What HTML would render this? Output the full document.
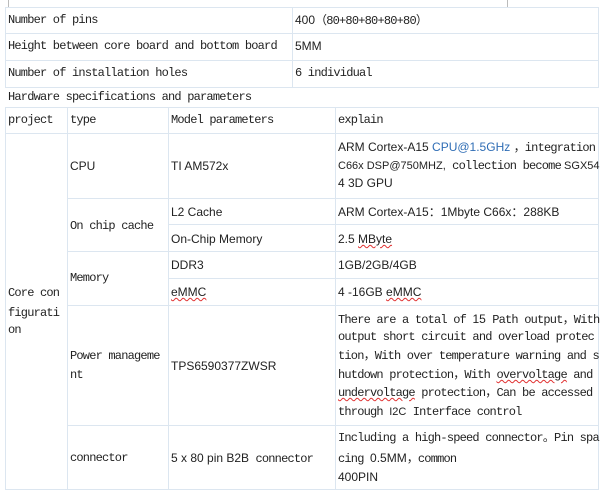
<!DOCTYPE html>
<html><head><meta charset="utf-8"><style>
body{margin:0;width:604px;height:491px;background:#fff;position:relative;overflow:hidden;color:#222}
.h,.v{position:absolute;background:#dce6f0}
.h{height:1px}.v{width:1px}
.t{position:absolute;white-space:nowrap;height:18px;line-height:18px;font-family:"Liberation Mono","Noto Sans CJK SC",monospace;font-size:12px;letter-spacing:-0.8px}
.m{font-family:"Liberation Mono","Noto Sans CJK SC",monospace;font-size:12px;letter-spacing:-0.8px}
.s{font-family:"Liberation Sans","Noto Sans CJK SC",sans-serif;font-size:12px;letter-spacing:0}
.b{color:#2f6db5}
.w{text-decoration:underline wavy #e03030;text-decoration-thickness:1px}
</style></head><body>
<div class="v" style="left:8px;top:0;height:7px;background:#bbb"></div>
<div class="v" style="left:507px;top:0;height:7px;background:#bbb"></div>
<div class="h" style="left:5px;top:7px;width:594px"></div>
<div class="h" style="left:5px;top:33px;width:594px"></div>
<div class="h" style="left:5px;top:60px;width:594px"></div>
<div class="h" style="left:5px;top:87px;width:594px"></div>
<div class="v" style="left:5px;top:7px;height:81px"></div>
<div class="v" style="left:292px;top:7px;height:81px"></div>
<div class="v" style="left:598px;top:7px;height:81px"></div>
<div class="t" style="left:8px;top:11px">Number of pins</div>
<div class="t s" style="left:295px;top:11px">400<span class="m">（80+80+80+80+80）</span></div>
<div class="t" style="left:8px;top:37px">Height between core board and bottom board</div>
<div class="t s" style="left:295px;top:37px">5MM</div>
<div class="t" style="left:8px;top:64px">Number of installation holes</div>
<div class="t" style="left:295px;top:64px">6 individual</div>
<div class="t" style="left:8px;top:88px">Hardware specifications and parameters</div>
<div class="h" style="left:5px;top:107px;width:594px"></div>
<div class="h" style="left:5px;top:133px;width:594px"></div>
<div class="h" style="left:67px;top:198px;width:532px"></div>
<div class="h" style="left:168px;top:224px;width:431px"></div>
<div class="h" style="left:67px;top:251px;width:532px"></div>
<div class="h" style="left:168px;top:278px;width:431px"></div>
<div class="h" style="left:67px;top:305px;width:532px"></div>
<div class="h" style="left:67px;top:425px;width:532px"></div>
<div class="h" style="left:5px;top:489px;width:594px"></div>
<div class="v" style="left:5px;top:107px;height:383px"></div>
<div class="v" style="left:67px;top:107px;height:383px"></div>
<div class="v" style="left:168px;top:107px;height:383px"></div>
<div class="v" style="left:335px;top:107px;height:383px"></div>
<div class="v" style="left:598px;top:107px;height:383px"></div>
<div class="t" style="left:8px;top:111px">project</div>
<div class="t" style="left:70px;top:111px">type</div>
<div class="t" style="left:171px;top:111px">Model parameters</div>
<div class="t" style="left:338px;top:111px">explain</div>
<div class="t" style="left:8px;top:284px">Core con</div>
<div class="t" style="left:8px;top:304px">figurati</div>
<div class="t" style="left:8px;top:321px">on</div>
<div class="t s" style="left:70px;top:157px">CPU</div>
<div class="t s" style="left:171px;top:157px">TI AM572x</div>
<div class="t s" style="left:338px;top:138px">ARM Cortex-A15 <span class="b">CPU@1.5GHz</span> <span class="m">，integration</span></div>
<div class="t s" style="left:338px;top:157px;font-size:11px">C66x DSP@750MHZ,<span class="m"> collection become</span> SGX54</div>
<div class="t s" style="left:338px;top:174px">4 3D GPU</div>
<div class="t" style="left:70px;top:217px">On chip cache</div>
<div class="t s" style="left:171px;top:203px">L2 Cache</div>
<div class="t s" style="left:338px;top:203px">ARM Cortex-A15：1Mbyte C66x：288KB</div>
<div class="t s" style="left:171px;top:230px">On-Chip Memory</div>
<div class="t s" style="left:338px;top:230px">2.5 <span class="w">MByte</span></div>
<div class="t" style="left:70px;top:269px">Memory</div>
<div class="t s" style="left:171px;top:256px">DDR3</div>
<div class="t s" style="left:338px;top:256px">1GB/2GB/4GB</div>
<div class="t s" style="left:171px;top:283px"><span class="w">eMMC</span></div>
<div class="t s" style="left:338px;top:283px">4 -16GB <span class="w">eMMC</span></div>
<div class="t" style="left:70px;top:347px">Power manageme</div>
<div class="t" style="left:70px;top:366px">nt</div>
<div class="t s" style="left:171px;top:357px">TPS6590377ZWSR</div>
<div class="t" style="left:338px;top:310px">There are a total of <span class="s">15</span> Path output，With</div>
<div class="t" style="left:338px;top:328px">output short circuit and overload protec</div>
<div class="t" style="left:338px;top:347px">tion，With over temperature warning and s</div>
<div class="t" style="left:338px;top:366px">hutdown protection，With <span class="w">overvoltage</span> and</div>
<div class="t" style="left:338px;top:384px"><span class="w">undervoltage</span> protection，Can be accessed</div>
<div class="t" style="left:338px;top:403px">through  <span class="s" style="font-size:11px">I2C</span> Interface control</div>
<div class="t" style="left:70px;top:449px">connector</div>
<div class="t" style="left:171px;top:449px"><span class="s">5 x 80 pin B2B</span> connector</div>
<div class="t" style="left:338px;top:429px">Including a high-speed connector。Pin spa</div>
<div class="t" style="left:338px;top:449px">cing <span class="s">0.5MM</span>，common</div>
<div class="t s" style="left:338px;top:468px">400PIN</div>
</body></html>
